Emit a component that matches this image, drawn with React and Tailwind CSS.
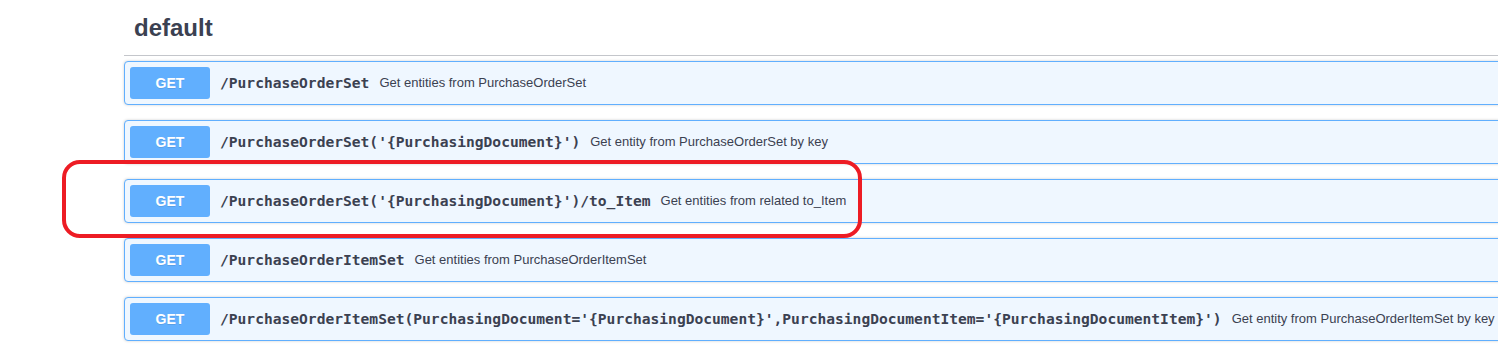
const ops = [
  { path: "/PurchaseOrderSet", summary: "Get entities from PurchaseOrderSet" },
  { path: "/PurchaseOrderSet('{PurchasingDocument}')", summary: "Get entity from PurchaseOrderSet by key" },
  { path: "/PurchaseOrderSet('{PurchasingDocument}')/to_Item", summary: "Get entities from related to_Item" },
  { path: "/PurchaseOrderItemSet", summary: "Get entities from PurchaseOrderItemSet" },
  {
    path: "/PurchaseOrderItemSet(PurchasingDocument='{PurchasingDocument}',PurchasingDocumentItem='{PurchasingDocumentItem}')",
    summary: "Get entity from PurchaseOrderItemSet by key",
  },
];

function OpBlock({ path, summary }) {
  return (
    <div className="mb-[15px] flex items-center rounded-[4px] border border-[#61affe] bg-[#eff7ff] p-[5px] shadow-[0_0_3px_rgba(0,0,0,0.19)]">
      <span className="min-w-[80px] rounded-[3px] bg-[#61affe] py-[6px] text-center text-[14px] font-bold leading-[20px] text-white [text-shadow:0_1px_0_rgba(0,0,0,0.1)]">
        GET
      </span>
      <span className="whitespace-nowrap px-[10px] font-['DejaVu_Sans_Mono',monospace] text-[14.6px] font-bold text-[#3b4151]">
        {path}
      </span>
      <span className="flex-1 whitespace-nowrap text-[13px] text-[#3b4151]">{summary}</span>
    </div>
  );
}

export default function App() {
  return (
    <div className="relative h-[362px] w-full overflow-hidden bg-white font-['Liberation_Sans',Arial,sans-serif]">
      <div className="ml-[124px] w-[1420px]">
        <h4 className="mb-[5px] border-b border-[#c4c6cb] pb-[13px] pl-[10px] pt-[14px] text-[24px] font-bold leading-[28px] text-[#3b4151]">
          default
        </h4>
        {ops.map((op) => (
          <OpBlock key={op.path} {...op} />
        ))}
      </div>
      <div className="pointer-events-none absolute left-[62px] top-[160px] h-[78px] w-[800px] rounded-[18px] border-4 border-[#ed1c24]" />
    </div>
  );
}
